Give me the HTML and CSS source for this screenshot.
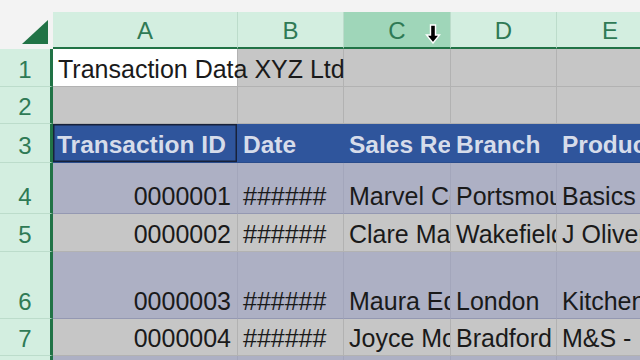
FILE: index.html
```html
<!DOCTYPE html>
<html lang="en">
<head>
    <meta charset="UTF-8">
    <title>Transactions - Excel</title>
    <link rel="stylesheet" href="styles.css">
</head>
<body>
    <div class="top-strip"></div>
    <div class="sheet">
        <!-- column headers -->
        <div class="corner">
            <svg class="corner-tri" width="26" height="24" viewBox="0 0 26 24"><polygon points="26,0 26,24 0,24" fill="#217346"/></svg>
        </div>
        <div class="col-head">A</div>
        <div class="col-head">B</div>
        <div class="col-head col-hover">C
            <svg class="cursor" width="16" height="20" viewBox="0 0 16 20"><path d="M5.5 1 H10.5 V11 H14.5 L8 19 L1.5 11 H5.5 Z" fill="#000" stroke="#fff" stroke-width="1.4"/></svg>
        </div>
        <div class="col-head">D</div>
        <div class="col-head">E</div>

        <!-- row 1 -->
        <div class="row-head">1</div>
        <div class="cell active spill">Transaction Data XYZ Ltd</div>
        <div class="cell"></div>
        <div class="cell"></div>
        <div class="cell"></div>
        <div class="cell"></div>

        <!-- row 2 -->
        <div class="row-head">2</div>
        <div class="cell"></div>
        <div class="cell"></div>
        <div class="cell"></div>
        <div class="cell"></div>
        <div class="cell"></div>

        <!-- row 3 table header -->
        <div class="row-head">3</div>
        <div class="cell th th-first">Transaction ID</div>
        <div class="cell th">Date</div>
        <div class="cell th">Sales Rep</div>
        <div class="cell th">Branch</div>
        <div class="cell th">Product</div>

        <!-- row 4 -->
        <div class="row-head">4</div>
        <div class="cell band num">0000001</div>
        <div class="cell band">######</div>
        <div class="cell band">Marvel Cox</div>
        <div class="cell band">Portsmouth</div>
        <div class="cell band">Basics -</div>

        <!-- row 5 -->
        <div class="row-head">5</div>
        <div class="cell num">0000002</div>
        <div class="cell">######</div>
        <div class="cell">Clare Mason</div>
        <div class="cell">Wakefield</div>
        <div class="cell">J Oliver</div>

        <!-- row 6 -->
        <div class="row-head">6</div>
        <div class="cell band num">0000003</div>
        <div class="cell band">######</div>
        <div class="cell band">Maura Edwards</div>
        <div class="cell band">London</div>
        <div class="cell band">Kitchen</div>

        <!-- row 7 -->
        <div class="row-head">7</div>
        <div class="cell num">0000004</div>
        <div class="cell">######</div>
        <div class="cell">Joyce McKay</div>
        <div class="cell">Bradford</div>
        <div class="cell">M&amp;S -</div>

        <!-- row 8 -->
        <div class="row-head">8</div>
        <div class="cell band"></div>
        <div class="cell band"></div>
        <div class="cell band"></div>
        <div class="cell band"></div>
        <div class="cell band"></div>
    </div>
</body>
</html>
```

FILE: styles.css
```css
body {
    margin: 0;
    width: 640px;
    height: 360px;
    overflow: hidden;
    background-color: #f3f3f3;
    font-family: "Liberation Sans", Arial, sans-serif;
    font-size: 24px;
}
.top-strip {
    height: 12px;
    background-color: #f3f3f3;
}
.sheet {
    display: grid;
    grid-template-columns: 53px 185px 106px 107px 106px 107px;
    grid-template-rows: 37px 38px 37px 39px 51px 38px 67px 37px 40px;
}
/* headers */
.corner {
    background-color: #f3f3f3;
    position: relative;
}
.corner-tri {
    position: absolute;
    left: 22px;
    top: 8px;
}
.col-head {
    position: relative;
    background-color: #d3eee0;
    color: #2f7a55;
    border-bottom: 2px solid #217346;
    border-right: 1px solid #bcdccb;
    box-sizing: border-box;
    display: flex;
    align-items: center;
    justify-content: center;
    padding-top: 3px;
}
.col-hover {
    background-color: #9fd6b9;
}
.cursor {
    position: absolute;
    left: 81px;
    top: 12px;
}
.row-head {
    background-color: #d3eee0;
    color: #2f7a55;
    border-right: 3px solid #217346;
    border-bottom: 1px solid #bcdccb;
    box-sizing: border-box;
    display: flex;
    align-items: flex-end;
    justify-content: center;
    padding-bottom: 2px;
}
/* cells */
.cell {
    background-color: #c6c6c6;
    color: #1a1a1a;
    font-size: 25px;
    border-right: 1px solid #b2b2b2;
    border-bottom: 1px solid #b2b2b2;
    box-sizing: border-box;
    white-space: nowrap;
    overflow: hidden;
    display: flex;
    align-items: flex-end;
    padding: 0 0 2px 5px;
}
.active {
    background-color: #ffffff;
}
.spill {
    overflow: visible;
    position: relative;
    z-index: 1;
}
.band {
    background-color: #adb0c4;
    border-bottom-color: #9498b2;
    border-right-color: #a3a6bb;
}
.num {
    justify-content: flex-end;
    padding-right: 6px;
}
.th {
    background-color: #2f559c;
    color: #d6dcea;
    font-weight: bold;
    font-size: 24.5px;
    border-right-color: #2f559c;
    border-bottom-color: #2a4c8c;
    align-items: center;
    padding: 3px 0 0 5px;
}
.th-first {
    box-shadow: inset 0 0 0 1.5px #18223a;
    padding-left: 4px;
}
```
